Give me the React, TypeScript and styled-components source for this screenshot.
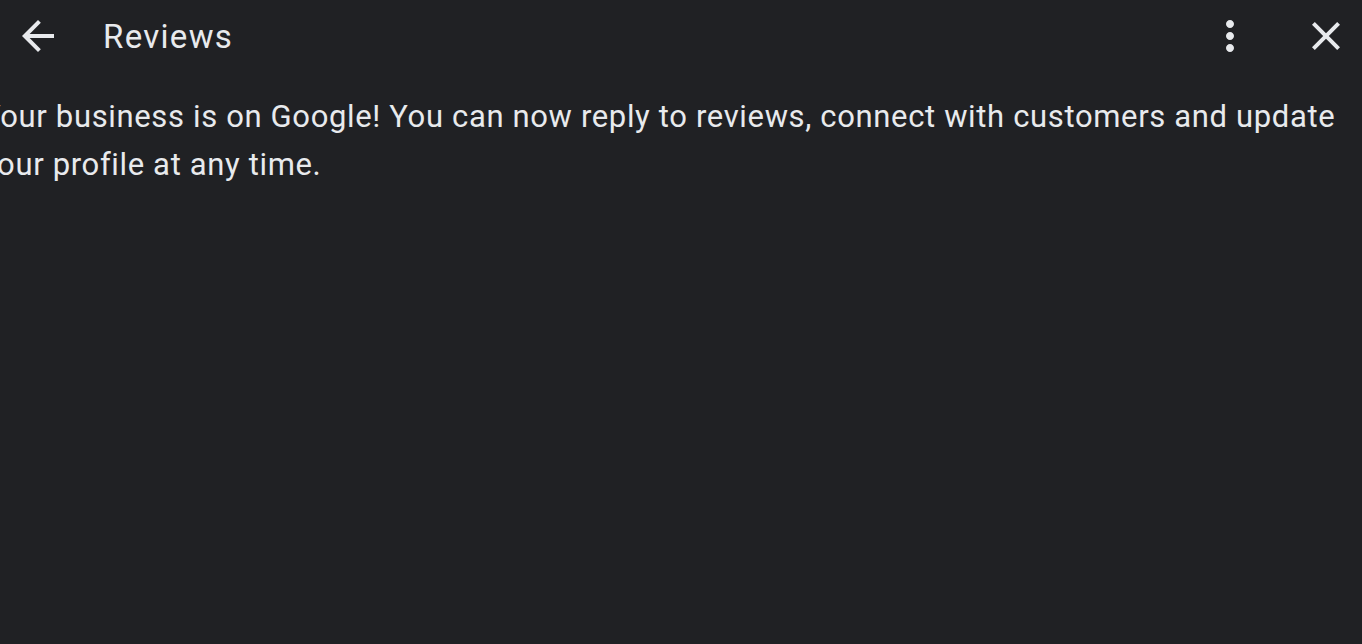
import styled, { createGlobalStyle } from "styled-components";

const GlobalStyle = createGlobalStyle`
  html, body {
    margin: 0;
    padding: 0;
    background: #202124;
    overflow: hidden;
  }
  body {
    font-family: Roboto, "Noto Sans", sans-serif;
    color: #e8eaed;
  }
`;

const Screen = styled.div`
  width: 1362px;
  height: 644px;
  background: #202124;
  overflow: hidden;
`;

const TopBar = styled.header`
  display: flex;
  align-items: center;
  height: 72px;
  padding: 0 12px 0 14px;
`;

const IconButton = styled.button`
  display: flex;
  align-items: center;
  justify-content: center;
  width: 48px;
  height: 48px;
  padding: 0;
  border: none;
  background: transparent;
  color: #e8eaed;
  cursor: pointer;

  svg {
    width: 48px;
    height: 48px;
    fill: currentColor;
  }
`;

const Title = styled.h1`
  flex: 1;
  margin: 0 0 0 41px;
  font-size: 33px;
  font-weight: 400;
  letter-spacing: 1.3px;
  color: #e8eaed;
`;

const Actions = styled.div`
  display: flex;
  align-items: center;
  gap: 48px;
`;

const Message = styled.p`
  margin: 21px 0 0 -18px;
  width: 1370px;
  font-size: 31px;
  line-height: 48px;
  letter-spacing: 0.65px;
  color: #e8eaed;
`;

export default function App() {
  return (
    <Screen>
      <GlobalStyle />
      <TopBar>
        <IconButton aria-label="Back">
          <svg viewBox="0 0 24 24">
            <path d="M20 11H7.83l5.59-5.59L12 4l-8 8 8 8 1.41-1.41L7.83 13H20v-2z" />
          </svg>
        </IconButton>
        <Title>Reviews</Title>
        <Actions>
          <IconButton aria-label="More options">
            <svg viewBox="0 0 24 24">
              <path d="M12 8c1.1 0 2-.9 2-2s-.9-2-2-2-2 .9-2 2 .9 2 2 2zm0 2c-1.1 0-2 .9-2 2s.9 2 2 2 2-.9 2-2-.9-2-2-2zm0 6c-1.1 0-2 .9-2 2s.9 2 2 2 2-.9 2-2-.9-2-2-2z" />
            </svg>
          </IconButton>
          <IconButton aria-label="Close">
            <svg viewBox="0 0 24 24">
              <path d="M19 6.41 17.59 5 12 10.59 6.41 5 5 6.41 10.59 12 5 17.59 6.41 19 12 13.41 17.59 19 19 17.59 13.41 12z" />
            </svg>
          </IconButton>
        </Actions>
      </TopBar>
      <Message>
        Your business is on Google! You can now reply to reviews, connect with customers and update
        your profile at any time.
      </Message>
    </Screen>
  );
}
